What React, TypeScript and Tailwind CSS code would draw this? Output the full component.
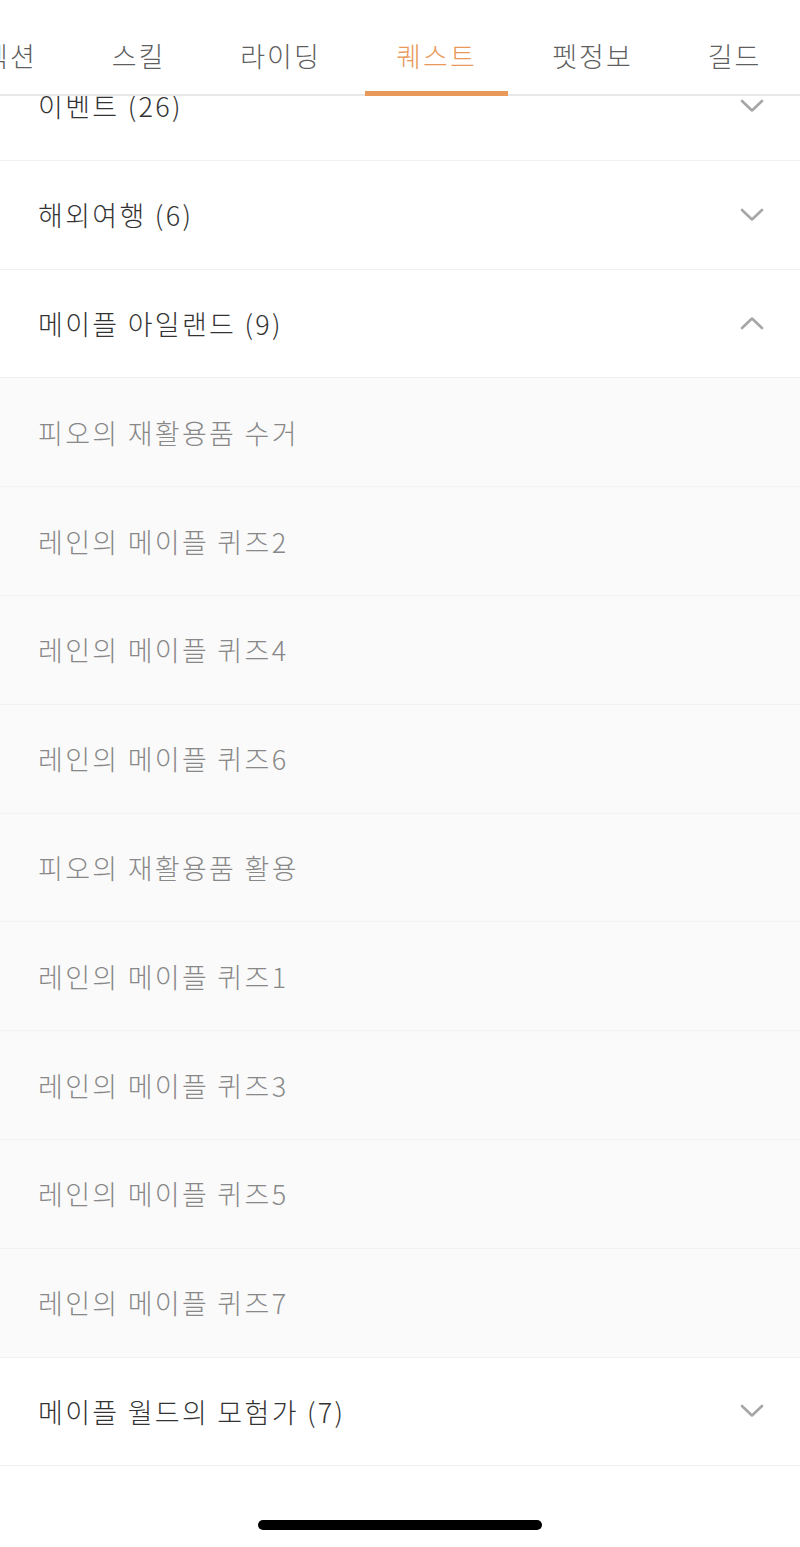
import React from "react";

const tabs = [
  { label: "컬렉션", w: "w-[143px]" },
  { label: "스킬", w: "w-[115px]" },
  { label: "라이딩", w: "w-[143px]" },
  { label: "퀘스트", w: "w-[143px]", active: true },
  { label: "펫정보", w: "w-[143px]" },
  { label: "길드", w: "w-[115px]" },
];

const items = [
  "피오의 재활용품 수거",
  "레인의 메이플 퀴즈2",
  "레인의 메이플 퀴즈4",
  "레인의 메이플 퀴즈6",
  "피오의 재활용품 활용",
  "레인의 메이플 퀴즈1",
  "레인의 메이플 퀴즈3",
  "레인의 메이플 퀴즈5",
  "레인의 메이플 퀴즈7",
];

function Chevron({ up }: { up?: boolean }) {
  return (
    <svg width="26" height="16" viewBox="0 0 26 16" fill="none">
      <path
        d={up ? "M3 13 L13 3.5 L23 13" : "M3 3 L13 12.5 L23 3"}
        stroke="#a6a6a6"
        strokeWidth="2.6"
        strokeLinecap="round"
        strokeLinejoin="round"
      />
    </svg>
  );
}

function HeaderRow({ title, up, className = "" }: { title: string; up?: boolean; className?: string }) {
  return (
    <div
      className={`flex h-[108.8px] shrink-0 items-center justify-between border-b border-[#f0f0f0] bg-white pl-[38px] pr-[35px] ${className}`}
    >
      <span className="text-[27px] font-light leading-none tracking-[2.3px] text-[#333333]">{title}</span>
      <Chevron up={up} />
    </div>
  );
}

export default function App() {
  return (
    <div
      className="flex h-[1547px] w-[800px] flex-col overflow-hidden bg-white"
      style={{ fontFamily: '"Noto Sans CJK KR", "Noto Sans", sans-serif' }}
    >
      <div className="relative z-10 h-[96px] shrink-0 overflow-hidden bg-white shadow-[inset_0_-2px_0_#e8e8e8]">
        <div className="ml-[-75px] flex h-full gap-[13px] whitespace-nowrap">
          {tabs.map((t) => (
            <div
              key={t.label}
              className={`${t.w} flex h-full shrink-0 justify-center pt-[36px] ${
                t.active ? "border-b-[5px] border-[#e99a5a]" : ""
              }`}
            >
              <span
                className={`text-[27px] font-light leading-[40px] tracking-[2px] ${
                  t.active ? "text-[#e99a5a]" : "text-[#5f5f5f]"
                }`}
              >
                {t.label}
              </span>
            </div>
          ))}
        </div>
      </div>

      <div className="flex flex-col overflow-hidden">
        <HeaderRow title="이벤트 (26)" className="mt-[-44px]" />
        <HeaderRow title="해외여행 (6)" />
        <HeaderRow title="메이플 아일랜드 (9)" up />
        {items.map((it, i) => (
          <div
            key={i}
            className="flex h-[108.8px] shrink-0 items-center border-b border-[#f2f2f2] bg-[#fafafa] pl-[38px]"
          >
            <span className="text-[27px] font-light leading-none tracking-[2.3px] text-[#888888]">{it}</span>
          </div>
        ))}
        <HeaderRow title="메이플 월드의 모험가 (7)" />
      </div>

      <div className="flex flex-1 items-end justify-center pb-[17px]">
        <div className="h-[10px] w-[284px] rounded-full bg-black" />
      </div>
    </div>
  );
}
